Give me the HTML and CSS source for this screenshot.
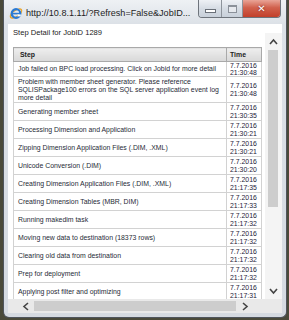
FILE: index.html
```html
<!DOCTYPE html>
<html lang="en">
<head>
  <meta charset="UTF-8">
  <title>Step Detail</title>
  <link rel="stylesheet" href="styles.css">
</head>
<body>
  <div class="window">
    <div class="titlebar">
      <svg class="ie-icon" width="14" height="14" viewBox="0 0 14 14">
        <ellipse cx="7" cy="7.5" rx="6.6" ry="3" fill="none" stroke="#e9a42a" stroke-width="1.3" transform="rotate(-35 7 7.5)"/>
        <circle cx="7" cy="7.5" r="4.3" fill="none" stroke="#2a7ad3" stroke-width="2.2"/>
        <rect x="3.2" y="6.8" width="7.6" height="1.6" fill="#2a7ad3"/>
        <rect x="8.6" y="8.4" width="3.2" height="2" fill="#fff"/>
      </svg>
      <span class="title">http://10.8.1.11/?Refresh=False&amp;JobID...</span>
      <div class="caption-btns">
        <span class="cbtn min"><i></i></span>
        <span class="cbtn max"><i></i></span>
        <span class="cbtn close">&#10005;</span>
      </div>
    </div>

    <div class="client">
      <div class="page">
        <p class="heading">Step Detail for JobID 1289</p>
        <div class="viewport">
          <table class="steps">
            <tr>
              <th class="col-step">Step</th>
              <th class="col-time">Time</th>
            </tr>
            <tr class="first">
              <td>Job failed on BPC load processing. Click on Jobid for more detail</td>
              <td class="time">7.7.2016<br>21:30:48</td>
            </tr>
            <tr>
              <td>Problem with member sheet generator. Please reference SQLISPackage100 errors on the SQL server application event log more detail</td>
              <td class="time">7.7.2016<br>21:30:48</td>
            </tr>
            <tr>
              <td>Generating member sheet</td>
              <td class="time">7.7.2016<br>21:30:35</td>
            </tr>
            <tr>
              <td>Processing Dimension and Application</td>
              <td class="time">7.7.2016<br>21:30:21</td>
            </tr>
            <tr>
              <td>Zipping Dimension Application Files (.DIM, .XML)</td>
              <td class="time">7.7.2016<br>21:30:21</td>
            </tr>
            <tr>
              <td>Unicode Conversion (.DIM)</td>
              <td class="time">7.7.2016<br>21:30:20</td>
            </tr>
            <tr>
              <td>Creating Dimension Application Files (.DIM, .XML)</td>
              <td class="time">7.7.2016<br>21:17:35</td>
            </tr>
            <tr>
              <td>Creating Dimension Tables (MBR, DIM)</td>
              <td class="time">7.7.2016<br>21:17:33</td>
            </tr>
            <tr>
              <td>Running makedim task</td>
              <td class="time">7.7.2016<br>21:17:32</td>
            </tr>
            <tr>
              <td>Moving new data to destination (18373 rows)</td>
              <td class="time">7.7.2016<br>21:17:32</td>
            </tr>
            <tr>
              <td>Clearing old data from destination</td>
              <td class="time">7.7.2016<br>21:17:32</td>
            </tr>
            <tr>
              <td>Prep for deployment</td>
              <td class="time">7.7.2016<br>21:17:32</td>
            </tr>
            <tr>
              <td>Applying post filter and optimizing</td>
              <td class="time">7.7.2016<br>21:17:31</td>
            </tr>
          </table>
        </div>
        <div class="hscroll">
          <span class="sbtn">
            <svg width="8" height="9" viewBox="0 0 8 9"><polyline points="6,1 2,4.5 6,8" fill="none" stroke="#444" stroke-width="1.6"/></svg>
          </span>
          <span class="hthumb"></span>
          <span class="sbtn">
            <svg width="8" height="9" viewBox="0 0 8 9"><polyline points="2,1 6,4.5 2,8" fill="none" stroke="#444" stroke-width="1.6"/></svg>
          </span>
        </div>
      </div>

      <div class="vscroll">
        <span class="sbtn">
          <svg width="9" height="8" viewBox="0 0 9 8"><polyline points="1,6 4.5,2 8,6" fill="none" stroke="#444" stroke-width="1.6"/></svg>
        </span>
        <span class="vthumb"></span>
        <span class="vtrack"></span>
        <span class="sbtn">
          <svg width="9" height="8" viewBox="0 0 9 8"><polyline points="1,2 4.5,6 8,2" fill="none" stroke="#444" stroke-width="1.6"/></svg>
        </span>
        <span class="corner"></span>
      </div>
    </div>
  </div>
</body>
</html>
```

FILE: styles.css
```css
body {
  margin: 0;
  background: #4a4a3a;
  font-family: "Liberation Sans", Arial, sans-serif;
}

.window {
  margin-left: 3px;
  width: 284px;
  height: 318px;
  box-sizing: border-box;
  border: 1px solid #4f555d;
  border-top: 0;
  border-radius: 0 0 6px 6px;
  background: linear-gradient(#eef1f4, #dce1e7 24px, #d5dae1);
  padding: 0 4px 4px;
  display: flex;
  flex-direction: column;
}

/* barra de titulo */
.titlebar {
  height: 24px;
  flex: none;
  display: flex;
  align-items: center;
}
.ie-icon {
  margin: 2px 3px 0 1px;
  flex: none;
}
.title {
  font-size: 9.1px;
  color: #1e1e1e;
  padding-top: 2px;
  white-space: nowrap;
}
.caption-btns {
  margin-left: auto;
  margin-right: 1px;
  align-self: flex-start;
  display: flex;
  height: 17px;
  border: 1px solid #6e747c;
  border-top: 0;
  border-radius: 0 0 4px 4px;
  overflow: hidden;
}
.cbtn {
  display: flex;
  align-items: center;
  justify-content: center;
  height: 100%;
}
.cbtn.min,
.cbtn.max {
  width: 22px;
  background: linear-gradient(#eef1f5, #d6dce4 50%, #c8d0da);
  border-right: 1px solid #8d939b;
}
.cbtn.max {
  width: 20px;
}
.cbtn.min i {
  width: 9px;
  height: 2px;
  margin-top: 4px;
  background: #fff;
  border: 1px solid #6a7079;
}
.cbtn.max i {
  width: 7px;
  height: 5px;
  border: 1px solid #8b919a;
  border-top-width: 2px;
  background: #e6e9ee;
}
.cbtn.close {
  width: 37px;
  background: linear-gradient(#e9a497, #d1614d 45%, #c2402b);
  color: #fff;
  font-size: 10px;
  font-weight: bold;
  font-family: "DejaVu Sans", sans-serif;
  text-shadow: 0 0 2px #6b1a0e;
}

/* area de contenido */
.client {
  flex: 1;
  display: flex;
  background: #fff;
  overflow: hidden;
}
.page {
  width: 257px;
  display: flex;
  flex-direction: column;
}
.heading {
  margin: 0;
  height: 23px;
  box-sizing: border-box;
  padding: 4px 0 0 5px;
  font-size: 7.6px;
  line-height: 10px;
  color: #222;
}
.viewport {
  flex: 1;
  overflow: hidden;
  padding-left: 5px;
}

.steps {
  border-collapse: collapse;
  width: 249px;
  font-size: 6.9px;
  color: #262a36;
  table-layout: fixed;
}
.steps th {
  height: 13px;
  padding: 0 0 0 6px;
  text-align: left;
  font-weight: bold;
  color: #222;
  background: linear-gradient(#eeeeee, #d8d8d8);
  border: 1px solid #a9a9a9;
}
.steps .col-step {
  width: 206px;
}
.steps .col-time {
  padding-left: 3px;
}
.steps td {
  padding: 1px 4px 0;
  line-height: 8px;
  border: 1px solid #d2d2d2;
  vertical-align: middle;
}
.steps td.time {
  padding: 1px 0 0 3px;
  color: #1d2138;
  white-space: nowrap;
}
.steps tr.first td {
  line-height: 6.5px;
}

/* barras de desplazamiento */
.hscroll {
  height: 14px;
  flex: none;
  display: flex;
  align-items: center;
  background: #e9e9e9;
}
.sbtn {
  flex: none;
  width: 17px;
  height: 17px;
  display: flex;
  align-items: center;
  justify-content: center;
}
.hscroll .sbtn {
  height: 14px;
}
.hscroll .sbtn:first-child {
  margin-left: 9px;
}
.hthumb {
  width: 202px;
  height: 10px;
  background: #cdcdcd;
}
.vscroll {
  width: 17px;
  flex: none;
  display: flex;
  flex-direction: column;
  margin-top: 9px;
  background: #f4f4f4;
}
.vthumb {
  height: 157px;
  margin: 0 4px 0 3px;
  background: #cdcdcd;
}
.vtrack {
  flex: 1;
}
.corner {
  height: 14px;
  background: #e9e9e9;
}
```
